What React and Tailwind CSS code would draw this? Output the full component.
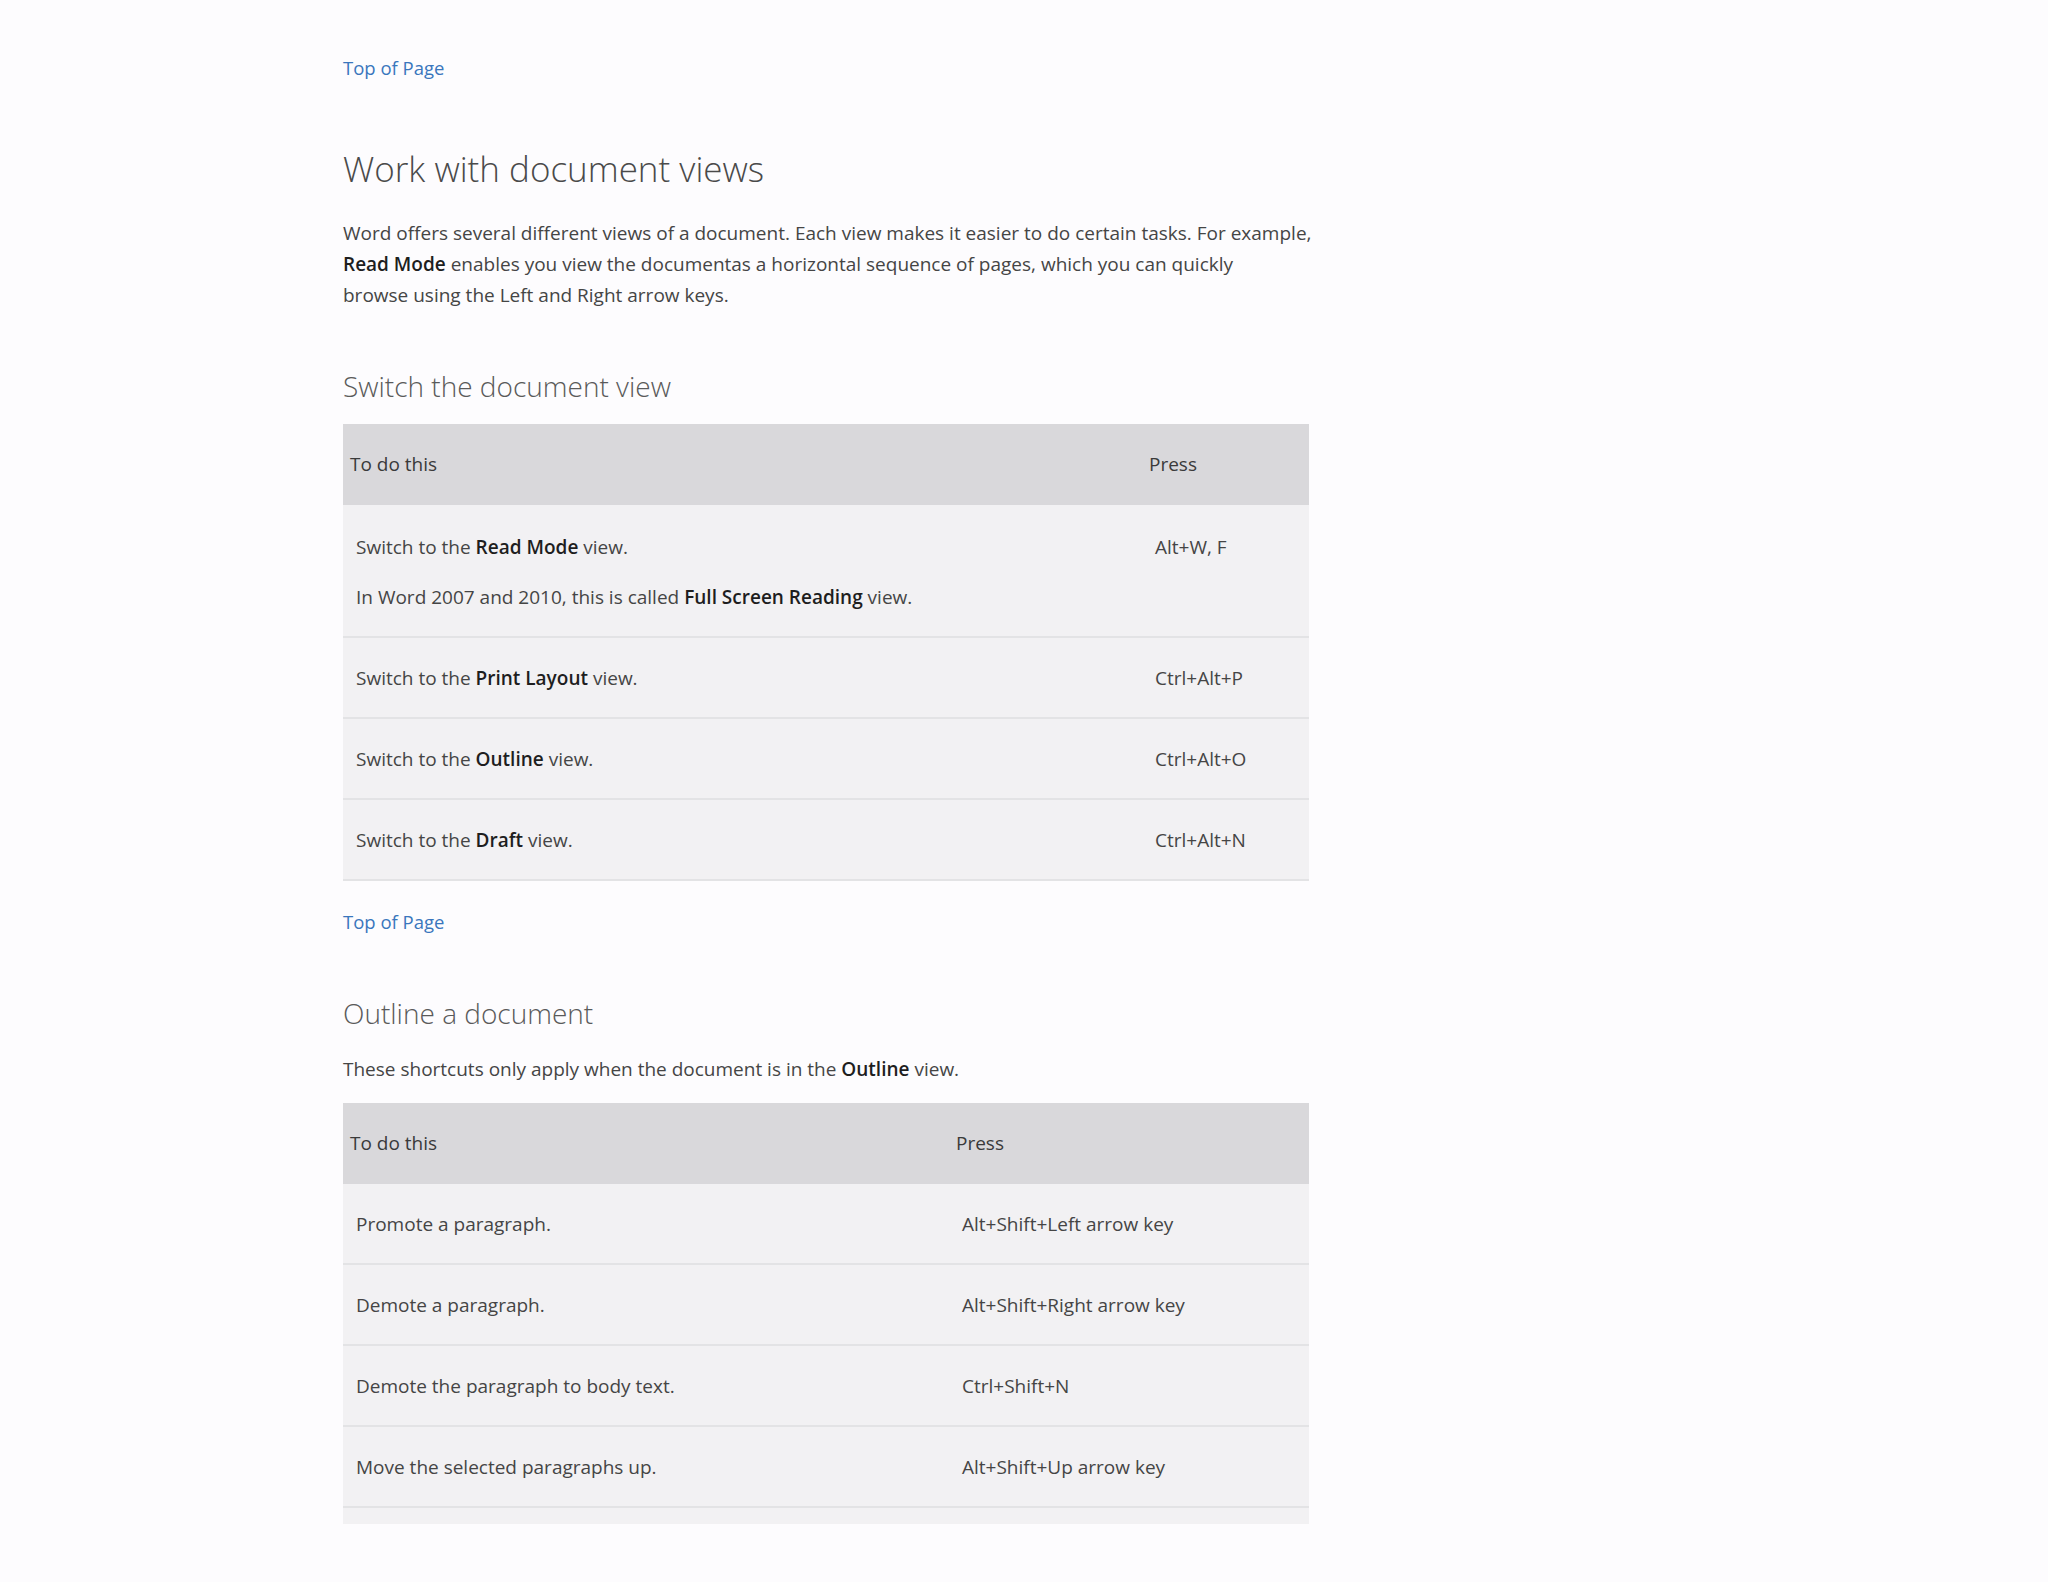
const viewRows = [
  {
    lines: [
      <>Switch to the <b>Read Mode</b> view.</>,
      <>In Word 2007 and 2010, this is called <b>Full Screen Reading</b> view.</>,
    ],
    keys: "Alt+W, F",
  },
  { lines: [<>Switch to the <b>Print Layout</b> view.</>], keys: "Ctrl+Alt+P" },
  { lines: [<>Switch to the <b>Outline</b> view.</>], keys: "Ctrl+Alt+O" },
  { lines: [<>Switch to the <b>Draft</b> view.</>], keys: "Ctrl+Alt+N" },
];

const outlineRows = [
  { lines: ["Promote a paragraph."], keys: "Alt+Shift+Left arrow key" },
  { lines: ["Demote a paragraph."], keys: "Alt+Shift+Right arrow key" },
  { lines: ["Demote the paragraph to body text."], keys: "Ctrl+Shift+N" },
  { lines: ["Move the selected paragraphs up."], keys: "Alt+Shift+Up arrow key" },
];

function TopLink() {
  return (
    <a href="#top" className="block text-[18.5px] leading-7 text-[#3a76bd]">
      Top of Page
    </a>
  );
}

function ShortcutTable({ rows, firstCol, cut }) {
  return (
    <div className="w-[966px]">
      <div className="flex h-[81px] items-center bg-[#d9d8db] text-[19px] text-[#3a3a3a]">
        <div className={`${firstCol} pl-[7px]`}>To do this</div>
        <div className="pl-[7px]">Press</div>
      </div>
      {rows.map((row, i) => (
        <div
          key={i}
          className={`flex border-b-2 border-[#e3e3e5] bg-[#f2f1f3] pb-[25px] text-[19px] leading-7 text-[#454545] [&_b]:font-semibold [&_b]:text-[#1e1e1e] ${row.lines.length > 1 ? "pt-[28px]" : "pt-[26px]"}`}
        >
          <div className={`${firstCol} flex flex-col gap-[22px] pl-[13px]`}>
            {row.lines.map((l, j) => (
              <p key={j}>{l}</p>
            ))}
          </div>
          <div className="pl-[13px]">{row.keys}</div>
        </div>
      ))}
      {cut && <div className="h-[16px] bg-[#f2f1f3]" />}
    </div>
  );
}

export default function App() {
  return (
    <div className="min-h-screen bg-[#fdfcfe] pl-[343px] pt-[54px] font-['Open_Sans',sans-serif]">
      <TopLink />

      <h1 className="mt-[63px] text-[35px] leading-[48px] font-light text-[#4a4a4a]">Work with document views</h1>

      <p className="mt-[25px] w-[970px] text-[19px] leading-[31px] text-[#454545]">
        Word offers several different views of a document. Each view makes it easier to do certain tasks. For example,{" "}
        <b className="font-semibold text-[#1e1e1e]">Read Mode</b> enables you view the documentas a horizontal sequence of pages, which you can quickly
        <br />
        browse using the Left and Right arrow keys.
      </p>

      <h2 className="mt-[55px] text-[28px] leading-[40px] font-light text-[#5a5a5a]">Switch the document view</h2>

      <div className="mt-[18px]">
        <ShortcutTable rows={viewRows} firstCol="w-[799px]" />
      </div>

      <div className="mt-[27px]">
        <TopLink />
      </div>

      <h2 className="mt-[57px] text-[28px] leading-[40px] font-light text-[#5a5a5a]">Outline a document</h2>

      <p className="mt-[22px] text-[19px] leading-7 text-[#454545]">
        These shortcuts only apply when the document is in the <b className="font-semibold text-[#1e1e1e]">Outline</b> view.
      </p>

      <div className="mt-[20px] pb-[58px]">
        <ShortcutTable rows={outlineRows} firstCol="w-[606px]" cut />
      </div>
    </div>
  );
}
